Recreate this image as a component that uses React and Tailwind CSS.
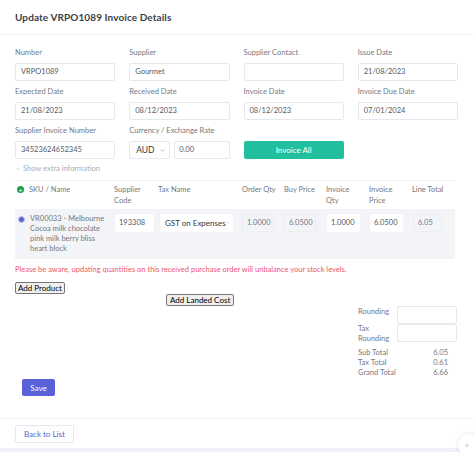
import React from "react";
import { ChevronDown, ArrowDown } from "lucide-react";

const font = { fontFamily: 'Lato, "Open Sans", sans-serif' };

function Field({ label, value }) {
  return (
    <div className="flex flex-col">
      <label className="text-[7.5px] leading-[10px] text-[#75797f] mb-[5px]">{label}</label>
      <div className="h-[18px] border border-[#e6e8ec] rounded-[2px] px-[5px] flex items-center text-[7.5px] text-[#55595f]">
        {value}
      </div>
    </div>
  );
}

const cols = "grid grid-cols-[96px_43px_84px_42px_42px_43px_43px_40px]";

export default function App() {
  return (
    <div style={font} className="w-[474px] h-[452px] bg-white flex flex-col overflow-hidden relative">
      {/* header */}
      <div className="shrink-0 h-[35px] border-b border-[#eef0f3] flex items-center px-[15px]">
        <h1 className="text-[10px] font-bold text-[#3b4046] tracking-[0.1px]">Update VRPO1089 Invoice Details</h1>
      </div>

      <div className="shrink-0 px-[15px] pt-[13px]">
        {/* form grid */}
        <div className="grid grid-cols-4 gap-x-[14px] gap-y-[6px] pr-[1px]">
          <Field label="Number" value="VRPO1089" />
          <Field label="Supplier" value="Gourmet" />
          <Field label="Supplier Contact" value="" />
          <Field label="Issue Date" value="21/08/2023" />
          <Field label="Expected Date" value="21/08/2023" />
          <Field label="Received Date" value="08/12/2023" />
          <Field label="Invoice Date" value="08/12/2023" />
          <Field label="Invoice Due Date" value="07/01/2024" />
          <Field label="Supplier Invoice Number" value="34523624652345" />
          <div className="flex flex-col">
            <label className="text-[7.5px] leading-[10px] text-[#75797f] mb-[5px]">Currency / Exchange Rate</label>
            <div className="flex gap-[4px]">
              <div className="h-[18px] w-[41px] border border-[#e6e8ec] rounded-[2px] pl-[6px] pr-[3px] flex items-center justify-between text-[8.5px] text-[#343a40]">
                AUD
                <ChevronDown className="w-[7px] h-[7px] text-[#9aa0a6]" />
              </div>
              <div className="h-[18px] flex-1 border border-[#e6e8ec] rounded-[2px] px-[4px] flex items-center text-[7.5px] text-[#55595f]">
                0.00
              </div>
            </div>
          </div>
          <div className="flex flex-col justify-end">
            <button className="h-[18px] w-full rounded-[2px] bg-[#22bf9f] text-white text-[8px]">Invoice All</button>
          </div>
          <div />
        </div>

        <div className="mt-[5px] flex items-center gap-[2px] text-[7.5px] leading-[10px] text-[#a8adb3]">
          <ChevronDown className="w-[6px] h-[6px]" />
          Show extra information
        </div>

        {/* table */}
        <div className="mt-[6px] border-t border-[#eef0f3] w-[440px]">
          <div className={`${cols} pt-[3px] pb-[3px] text-[7.5px] leading-[11px] text-[#75797f]`}>
            <div className="flex items-start gap-[5px] pl-[2px]">
              <span className="mt-[2px] w-[7px] h-[7px] rounded-full bg-[#1e9f4f] flex items-center justify-center">
                <span className="text-white text-[6px] leading-none font-bold">+</span>
              </span>
              <span>SKU / Name</span>
            </div>
            <div className="pl-[3px]">Supplier<br />Code</div>
            <div className="pl-[4px]">Tax Name</div>
            <div className="pl-[4px]">Order Qty</div>
            <div className="pl-[4px]">Buy Price</div>
            <div className="pl-[4px]">Invoice<br />Qty</div>
            <div className="pl-[4px]">Invoice<br />Price</div>
            <div className="pl-[4px]">Line Total</div>
          </div>
          <div className={`${cols} bg-[#f3f4f7] h-[50px] pt-[5px] text-[7.5px] text-[#75797f]`}>
            <div className="flex items-start gap-[5px] pl-[3px]">
              <span className="mt-[2px] shrink-0 w-[7px] h-[7px] rounded-full bg-[#5661d4] border-[1.5px] border-[#c6c9f0]" />
              <span className="leading-[10px]">VR00033 - Melbourne Cocoa milk chocolate pink milk berry bliss heart block</span>
            </div>
            <div className="pl-[4px]">
              <div className="h-[18px] bg-white rounded-[2px] flex items-center px-[4px] text-[#55595f]">193308</div>
            </div>
            <div className="pl-[6px]">
              <div className="h-[18px] w-[73px] bg-white rounded-[2px] flex items-center justify-between pl-[5px] pr-[3px] text-[8px] whitespace-nowrap text-[#343a40]">
                GST on Expenses
                <ChevronDown className="w-[6px] h-[6px] text-[#9aa0a6]" />
              </div>
            </div>
            <div className="pl-[4px] pr-[6px]">
              <div className="h-[18px] border border-[#eceef2] rounded-[2px] flex items-center px-[4px] text-[#75797f]">1.0000</div>
            </div>
            <div className="pl-[4px] pr-[6px]">
              <div className="h-[18px] border border-[#eceef2] rounded-[2px] flex items-center px-[4px] text-[#75797f]">6.0500</div>
            </div>
            <div className="pl-[5px] pr-[5px]">
              <div className="h-[18px] bg-white rounded-[2px] flex items-center px-[4px] text-[#55595f]">1.0000</div>
            </div>
            <div className="pl-[5px] pr-[5px]">
              <div className="h-[18px] bg-white rounded-[2px] flex items-center px-[4px] text-[#55595f]">6.0500</div>
            </div>
            <div className="pl-[5px] pr-[6px]">
              <div className="h-[18px] border border-[#eceef2] rounded-[2px] flex items-center px-[4px] text-[#75797f]">6.05</div>
            </div>
          </div>
        </div>

        <p className="mt-[6px] text-[7.5px] leading-[10px] text-[#f1556c]">
          Please be aware, updating quantities on this received purchase order will unbalance your stock levels.
        </p>

        <div className="mt-[7px] flex flex-col items-start">
          <button className="h-[12px] px-[2px] border border-[#767676] bg-[#efefef] rounded-[2px] text-[8px] leading-none text-black">
            Add Product
          </button>
          <button className="ml-[151px] h-[12px] px-[3px] border border-[#767676] bg-[#efefef] rounded-[2px] text-[8px] leading-none text-black">
            Add Landed Cost
          </button>
        </div>

        {/* totals */}
        <div className="ml-[343px] w-[100px] text-[7.5px] text-[#75797f]">
          <div className="flex">
            <span className="w-[39px] pt-[1px] leading-[10px]">Rounding</span>
            <div className="w-[60px] h-[18px] border border-[#e6e8ec] rounded-[2px]" />
          </div>
          <div className="flex">
            <span className="w-[39px] leading-[10px]">Tax<br />Rounding</span>
            <div className="w-[60px] h-[18px] border border-[#e6e8ec] rounded-[2px]" />
          </div>
          <div className="mt-[4px] leading-[10px] w-[90px]">
            <div className="flex justify-between"><span>Sub Total</span><span>6.05</span></div>
            <div className="flex justify-between"><span>Tax Total</span><span>0.61</span></div>
            <div className="flex justify-between"><span>Grand Total</span><span>6.66</span></div>
          </div>
        </div>

        <button className="block mt-[1px] ml-[7px] h-[17px] w-[33px] rounded-[2px] bg-[#5a60d8] text-white text-[8px]">Save</button>
      </div>

      <div className="shrink-0 mt-[22px] border-t border-[#eef0f3] px-[15px] pt-[6px]">
        <button className="block h-[18px] px-[8px] border border-[#e6e8ec] rounded-[2px] text-[8px] text-[#5a60d8]">Back to List</button>
      </div>

      <div className="absolute left-0 right-0 bottom-0 h-[4px] bg-[#eef1f7]" />
      <div className="absolute right-[-6px] bottom-[-4px] w-[22px] h-[22px] rounded-full bg-white shadow-[0_0_4px_rgba(0,0,0,0.12)] flex items-center justify-center">
        <ArrowDown className="w-[6px] h-[6px] text-[#b0b4ba] -ml-[4px]" />
      </div>
    </div>
  );
}
